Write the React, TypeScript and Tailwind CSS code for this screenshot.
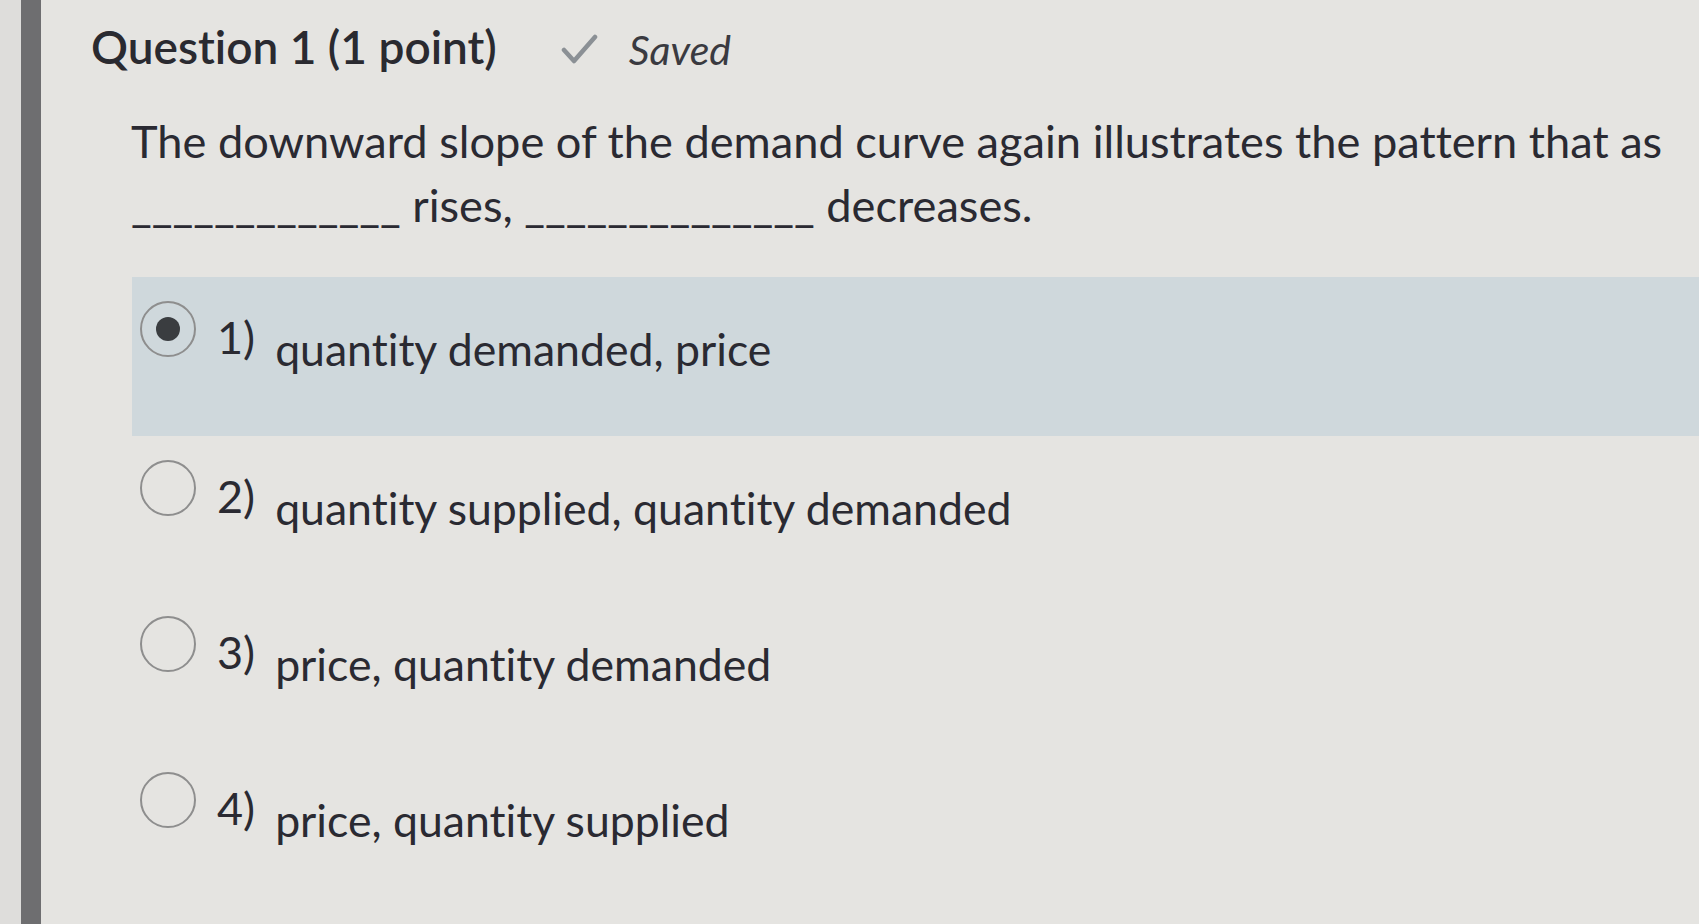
import React from "react";

const font = { fontFamily: "Lato, 'Open Sans', sans-serif" };

function Radio({ checked }: { checked?: boolean }) {
  return (
    <div className="mt-[24px] flex h-[56px] w-[56px] shrink-0 items-center justify-center rounded-full border-2 border-[#8e8e8e]">
      {checked ? <div className="h-[24px] w-[24px] rounded-full bg-[#3a3d40]" /> : null}
    </div>
  );
}

function Option({ n, label, checked, tall }: { n: string; label: string; checked?: boolean; tall?: boolean }) {
  return (
    <div
      className={
        "flex items-start pl-[8px] " +
        (tall ? "h-[159px] " : "h-[156px] ") +
        (checked ? "bg-[#cfd8dc]" : "")
      }
    >
      <Radio checked={checked} />
      <div className="ml-[21px] mt-[38px] text-[45px] leading-none text-[#2a2a32]">{n}</div>
      <div className="ml-[20px] mt-[50px] text-[44.6px] leading-none text-[#2a2a32]">{label}</div>
    </div>
  );
}

export default function App() {
  return (
    <div
      className="flex h-[924px] w-full overflow-hidden bg-[#e5e4e1] [font-variant-ligatures:none]"
      style={font}
    >
      <div className="w-[21px] shrink-0 bg-[#dedddb]" />
      <div className="w-[20px] shrink-0 bg-[#6e6e70]" />
      <div className="flex min-w-0 flex-1 flex-col pl-[50px]">
        <div className="mt-[24px] flex items-start">
          <div className="text-[46px] font-semibold leading-none text-[#2a2a30]">
            Question 1 (1 point)
          </div>
          <svg className="ml-[64px] mt-[9px]" width="38" height="32" viewBox="0 0 38 32">
            <polyline points="3,17 13,28 34,4" fill="none" stroke="#8b9095" strokeWidth="4.5" strokeLinecap="round" strokeLinejoin="round" />
          </svg>
          <div className="ml-[30px] mt-[5px] text-[41px] italic leading-none text-[#3a3a40]">Saved</div>
        </div>
        <div className="ml-[40px] mt-[39px] text-[45.2px] leading-[64px] text-[#2a2a32]">
          <div>The downward slope of the demand curve again illustrates the pattern that as</div>
          <div>_____________ rises, ______________ decreases.</div>
        </div>
        <div className="ml-[41px] mt-[40px] flex flex-col">
          <Option n="1)" label="quantity demanded, price" checked tall />
          <Option n="2)" label="quantity supplied, quantity demanded" />
          <Option n="3)" label="price, quantity demanded" />
          <Option n="4)" label="price, quantity supplied" />
        </div>
      </div>
    </div>
  );
}
